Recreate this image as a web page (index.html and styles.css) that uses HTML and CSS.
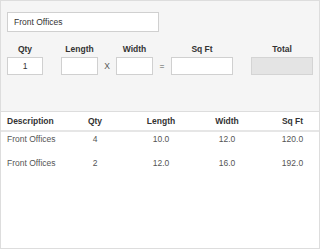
FILE: index.html
```html
<!DOCTYPE html>
<html lang="en">
<head>
    <meta charset="UTF-8">
    <meta name="viewport" content="width=device-width, initial-scale=1.0">
    <title>Area Calculator</title>
    <link rel="stylesheet" href="styles.css">
</head>
<body>
    <div class="container">
        <div class="entry">
            <input type="text" class="description-input" value="Front Offices">

            <div class="fields">
                <div class="field">
                    <label>Qty</label>
                    <input type="text" class="qty" value="1">
                </div>
                <span class="op"></span>
                <div class="field">
                    <label>Length</label>
                    <input type="text" class="small">
                </div>
                <span class="op">X</span>
                <div class="field">
                    <label>Width</label>
                    <input type="text" class="small">
                </div>
                <span class="op">=</span>
                <div class="field">
                    <label>Sq Ft</label>
                    <input type="text" class="wide">
                </div>
                <span class="op"></span>
                <div class="field">
                    <label>Total</label>
                    <input type="text" class="wide total" disabled>
                </div>
            </div>
        </div>

        <table class="rooms">
            <colgroup>
                <col class="col-desc">
                <col class="col-num">
                <col class="col-num">
                <col class="col-num">
                <col class="col-last">
            </colgroup>
            <thead>
                <tr>
                    <th class="left">Description</th>
                    <th>Qty</th>
                    <th>Length</th>
                    <th>Width</th>
                    <th>Sq Ft</th>
                </tr>
            </thead>
            <tbody>
                <tr>
                    <td class="left">Front Offices</td>
                    <td>4</td>
                    <td>10.0</td>
                    <td>12.0</td>
                    <td>120.0</td>
                </tr>
                <tr>
                    <td class="left">Front Offices</td>
                    <td>2</td>
                    <td>12.0</td>
                    <td>16.0</td>
                    <td>192.0</td>
                </tr>
            </tbody>
        </table>
    </div>
</body>
</html>
```

FILE: styles.css
```css
:root {
    --panel-bg: #f5f5f5;
    --line: #dddddd;
    --input-border: #d0d0d0;
    --text-dark: #333333;
    --text-muted: #555555;
}

* {
    margin: 0;
    padding: 0;
    box-sizing: border-box;
    font-family: 'Liberation Sans', Arial, sans-serif;
}

body {
    background-color: #ffffff;
    width: 320px;
    height: 250px;
}

.container {
    width: 320px;
    height: 249px;
    border: 1px solid var(--line);
    background-color: #ffffff;
}

.entry {
    height: 111px;
    background-color: var(--panel-bg);
    border-bottom: 1px solid var(--line);
    padding: 11px 6px 0;
}

input {
    display: block;
    background-color: #ffffff;
    border: 1px solid var(--input-border);
    font-size: 8.5px;
    color: var(--text-dark);
    outline: none;
}

.description-input {
    width: 152px;
    height: 20px;
    padding: 0 6px;
    margin-bottom: 11px;
}

.fields {
    display: flex;
    align-items: flex-end;
}

.field {
    display: flex;
    flex-direction: column;
    align-items: center;
}

.field label {
    font-size: 8.5px;
    font-weight: bold;
    line-height: 12px;
    color: var(--text-dark);
    margin-bottom: 2px;
}

.field input {
    height: 18px;
    text-align: center;
}

.qty {
    width: 36px;
}

.small {
    width: 37px;
}

.wide {
    width: 62px;
}

.total,
.total:disabled {
    background-color: #e4e4e4;
    border-color: #d4d4d4;
}

.op {
    width: 18px;
    height: 18px;
    line-height: 18px;
    text-align: center;
    font-size: 8.5px;
    color: var(--text-muted);
}

.rooms {
    width: 318px;
    border-collapse: collapse;
    table-layout: fixed;
}

.col-desc {
    width: 61px;
}

.col-num {
    width: 66px;
}

.col-last {
    width: 59px;
}

.rooms th,
.rooms td {
    font-size: 8.5px;
    line-height: 12px;
    text-align: center;
    white-space: nowrap;
}

.rooms th {
    font-weight: bold;
    color: var(--text-dark);
    padding: 3px 0;
    border-bottom: 2px solid #e6e6e6;
}

.rooms td {
    color: var(--text-muted);
    padding: 1px 0 11px;
}

.rooms .left {
    text-align: left;
    padding-left: 6px;
}

.rooms th:last-child,
.rooms td:last-child {
    padding-left: 6px;
}
```
